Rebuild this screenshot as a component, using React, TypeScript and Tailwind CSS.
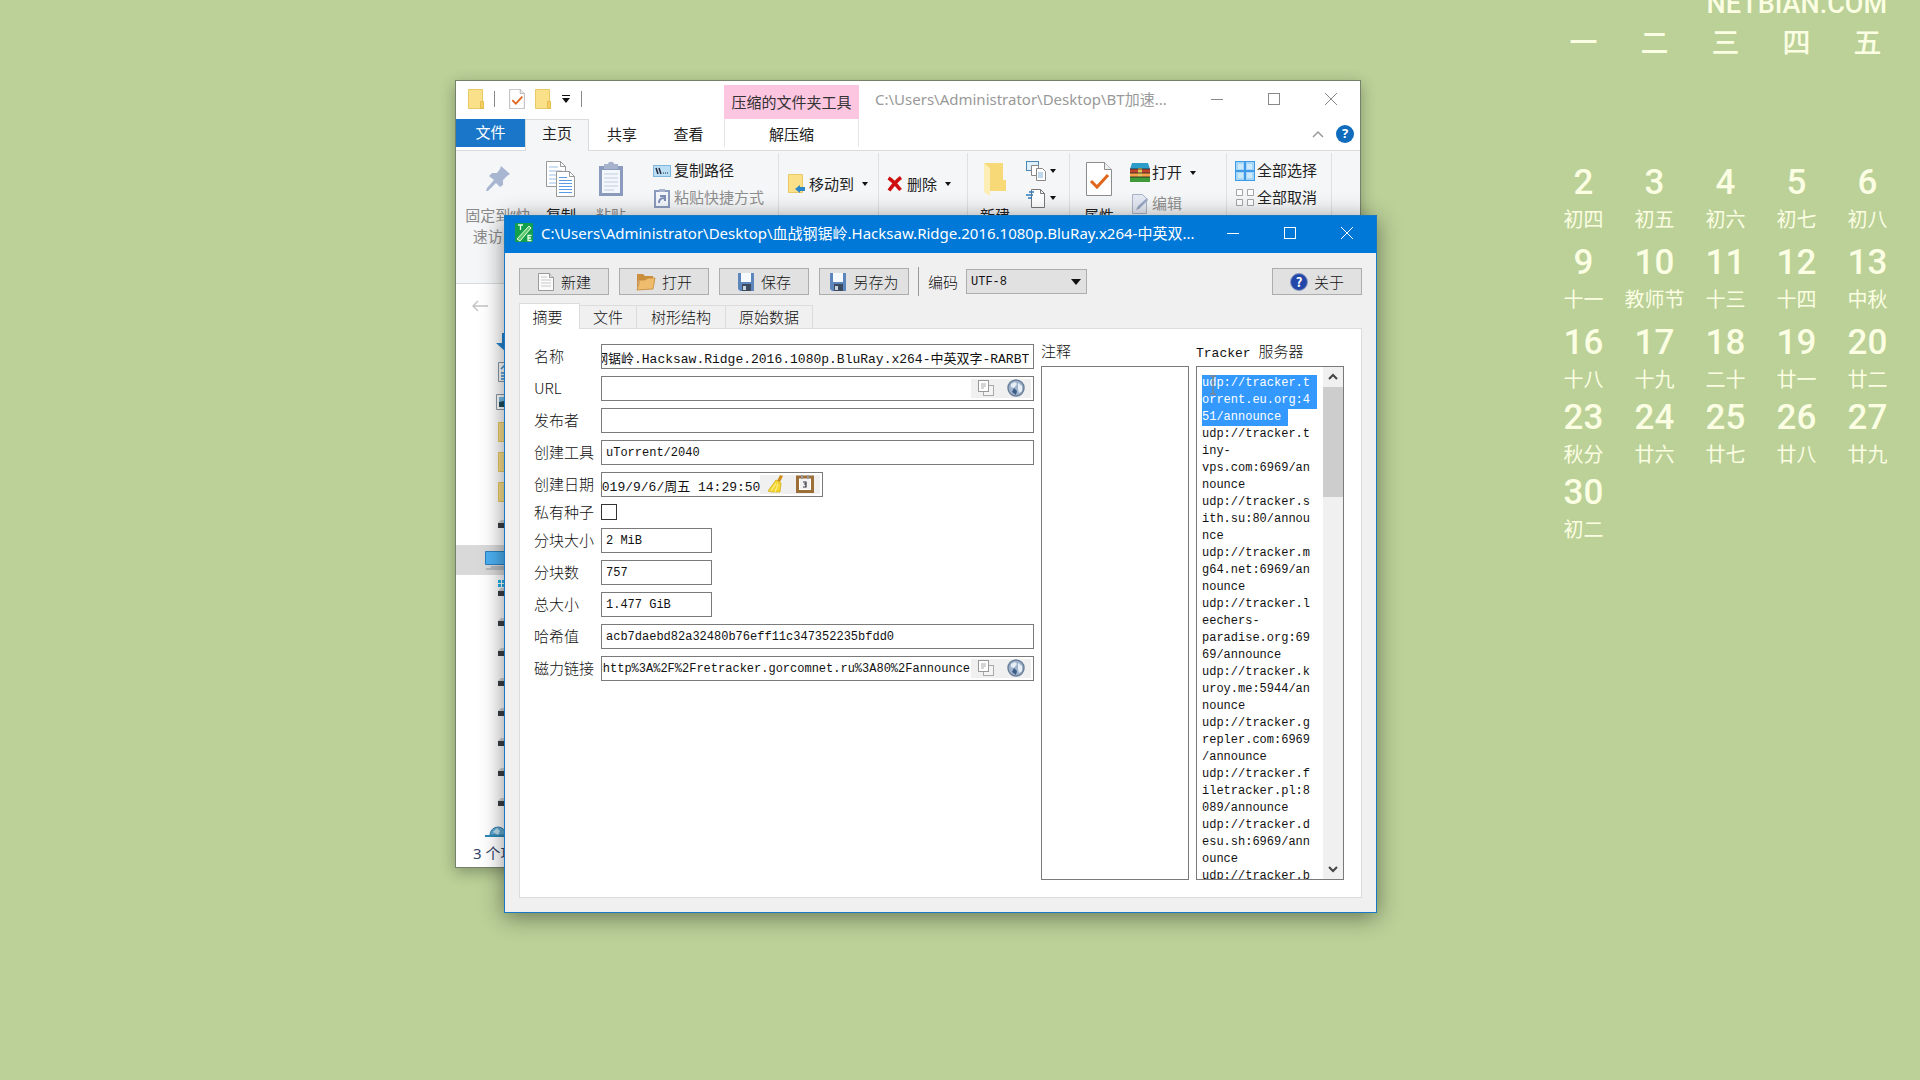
import { useEffect, useRef, type ReactNode } from "react";
import clsx from "clsx";

const weekdays = ["一", "二", "三", "四", "五"];

const weeks = [
  [["2", "初四"], ["3", "初五"], ["4", "初六"], ["5", "初七"], ["6", "初八"]],
  [["9", "十一"], ["10", "教师节"], ["11", "十三"], ["12", "十四"], ["13", "中秋"]],
  [["16", "十八"], ["17", "十九"], ["18", "二十"], ["19", "廿一"], ["20", "廿二"]],
  [["23", "秋分"], ["24", "廿六"], ["25", "廿七"], ["26", "廿八"], ["27", "廿九"]],
  [["30", "初二"]],
];

const trackers = [
  "udp://tracker.t\norrent.eu.org:4\n51/announce",
  "udp://tracker.t\niny-\nvps.com:6969/an\nnounce",
  "udp://tracker.s\nith.su:80/annou\nnce",
  "udp://tracker.m\ng64.net:6969/an\nnounce",
  "udp://tracker.l\neechers-\nparadise.org:69\n69/announce",
  "udp://tracker.k\nuroy.me:5944/an\nnounce",
  "udp://tracker.g\nrepler.com:6969\n/announce",
  "udp://tracker.f\niletracker.pl:8\n089/announce",
  "udp://tracker.d\nesu.sh:6969/ann\nounce",
  "udp://tracker.b",
];

/* ---------- Icons ---------- */

function FolderIcon({ className }: { className?: string }) {
  return (
    <svg viewBox="0 0 16 20" className={className} preserveAspectRatio="none">
      <path d="M.5.5h14v12h1v7H.5z" fill="#fbe08a" stroke="#e9c964" />
      <path d="M12.500 12.500h3v7h-3z" fill="#f3cf62" stroke="#e3bd50" />
    </svg>
  );
}

function Caret() {
  return (
    <svg viewBox="0 0 6 4" className="h-1 w-1.5 shrink-0">
      <path d="M0 0h6L3 4z" fill="#111" />
    </svg>
  );
}

function CheckDocIcon({ className }: { className?: string }) {
  return (
    <svg viewBox="0 0 26 34" className={className}>
      <path d="M.5.5h18l7 7v26H.5z" fill="#fff" stroke="#8d8d8d" />
      <path d="M18.500.5v7h7" fill="#eee" stroke="#8d8d8d" />
      <path d="M5 19l6 6L22 13" fill="none" stroke="#e0661b" strokeWidth="3" />
    </svg>
  );
}

function PinIcon() {
  return (
    <svg viewBox="0 0 26 26" className="h-[26px] w-[26px]">
      <path d="M16 0l9 8-3 2-1 1-3 3v5l-3 2-4-4-8 8-2 0 1-3 7-8-5-4 3-3h5l3-4z" fill="#a9b6d2" />
    </svg>
  );
}

function CopyIcon() {
  return (
    <svg viewBox="0 0 30 36" className="h-9 w-[30px]">
      <path d="M.5.5h14l5 5v20H.5z" fill="#fff" stroke="#999" />
      <path d="M14.500.5v5h5" fill="none" stroke="#999" />
      <path d="M3 6h9M3 10h13M3 14h8M3 18h8M3 22h8" stroke="#9cbfe8" />
      <path d="M10.500 10.500h13l5 5v20h-18z" fill="#fff" stroke="#999" />
      <path d="M23.500 10.500v5h5" fill="none" stroke="#999" />
      <path d="M13 16.500h8M13 19.500h13M13 22.500h13M13 25.500h13M13 28.500h13M13 31.500h13" stroke="#5b9ae4" />
    </svg>
  );
}

function PasteIcon() {
  return (
    <svg viewBox="0 0 26 36" className="h-9 w-[26px]">
      <rect x="1" y="5" width="24" height="30" fill="#8b9bbd" />
      <rect x="4" y="9" width="18" height="23" fill="#f3f6fb" />
      <path d="M6 3h4c0-3 6-3 6 0h4v5H6z" fill="#a7b3cd" />
      <path d="M6 13h14M6 17h14M6 21h14M6 25h14M6 29h10" stroke="#c3cee2" />
    </svg>
  );
}

function PathIcon() {
  return (
    <svg viewBox="0 0 18 12" className="h-3 w-[18px]">
      <rect x=".5" y=".5" width="17" height="11" fill="#b9def5" stroke="#7fb6dc" />
      <path d="M3 3l2 6M6 3l2 6" stroke="#223" strokeWidth="1.400" />
      <path d="M10 8h1M12 8h1M14 8h1" stroke="#223" />
    </svg>
  );
}

function ShortcutIcon() {
  return (
    <svg viewBox="0 0 18 20" className="h-5 w-[18px]">
      <path d="M2 3h14v16H2z" fill="#f3f6fb" stroke="#8b9bbd" strokeWidth="2" />
      <path d="M6 1h6v3H6z" fill="#a7b3cd" />
      <path d="M6 15c0-4 2-5 5-5M7 8h5v5" fill="none" stroke="#7d8fb5" strokeWidth="2" />
    </svg>
  );
}

function MoveToIcon() {
  return (
    <svg viewBox="0 0 18 20" className="h-5 w-[18px]">
      <path d="M.5.5h14v18H.5z" fill="#fbe08a" stroke="#e9c964" />
      <path d="M7 15l5-4v2h5v4h-5v2z" fill="#2a86c8" />
    </svg>
  );
}

function DeleteIcon() {
  return (
    <svg viewBox="0 0 16 16" className="h-4 w-4">
      <path d="M1.500 2c5 3 8 7 12 12M14 1.500C9 5 6 9 2 14.500" fill="none" stroke="#cf1010" strokeWidth="3.600" />
    </svg>
  );
}

function NewFolderIcon() {
  return (
    <svg viewBox="0 0 24 34" className="h-[34px] w-6">
      <path d="M1 1h19v17h3v11H6z" fill="#f8d978" />
      <path d="M1 1l6 5v28l-6-4z" fill="#fdeeb5" />
    </svg>
  );
}

function NewItemIcon() {
  return (
    <svg viewBox="0 0 20 20" className="h-5 w-5">
      <rect x=".5" y=".5" width="12" height="9" fill="#dff0fb" stroke="#4d87b5" />
      <path d="M5.500 4.500h7v10h-7z" fill="#fff" stroke="#888" />
      <path d="M10.500 7.500h6l3 3v9h-9z" fill="#fff" stroke="#888" />
      <path d="M12 12h5M12 14h5M12 16h5" stroke="#7fb0dc" />
    </svg>
  );
}

function EasyAccessIcon() {
  return (
    <svg viewBox="0 0 20 20" className="h-5 w-5">
      <path d="M5.500 1.500h9l4 4v14h-13z" fill="#fff" stroke="#777" />
      <path d="M14.500 1.500v4h4" fill="none" stroke="#777" />
      <path d="M3 4h5M0 7h7M2 10h4" stroke="#2c7cc0" strokeWidth="1.500" />
    </svg>
  );
}

function ArchiveIcon() {
  return (
    <svg viewBox="0 0 20 19" className="h-[19px] w-5">
      <path d="M2 0h16l2 6H0z" fill="#2e9cc9" />
      <rect y="6" width="20" height="4" fill="#c0452f" />
      <rect y="10" width="20" height="4" fill="#f2a24a" />
      <rect y="14" width="20" height="5" fill="#3f9a3a" />
      <rect x="8" y="5" width="4" height="9" fill="#e3c25a" />
      <path d="M0 6h20M0 10h20M0 14h20" stroke="#222" strokeWidth=".8" />
    </svg>
  );
}

function EditIcon() {
  return (
    <svg viewBox="0 0 18 20" className="h-5 w-[18px]">
      <path d="M1.500.5h10l4 4v15h-14z" fill="#e4e9f3" stroke="#aab4c8" />
      <path d="M5 16l2-4 9-8 1 2-9 9z" fill="#9aa8c4" />
    </svg>
  );
}

function GridIcon({ selected }: { selected?: boolean }) {
  return (
    <svg viewBox="0 0 20 20" className="h-5 w-5">
      {selected ? (
        <>
          <rect width="20" height="20" fill="#3f9be6" />
          <path d="M1 1h8v8H1zM11 1h8v8h-8zM1 11h8v8H1zM11 11h8v8h-8z" fill="#a5d5f8" />
          <path d="M3 3h5v5H3zM12 3h5v5h-5zM3 12h5v5H3zM12 12h5v5h-5z" fill="#cdeafd" />
        </>
      ) : (
        <path d="M1.500 1.500h6v6h-6zM12.500 1.500h6v6h-6zM1.500 11.500h6v6h-6zM12.500 11.500h6v6h-6z" fill="#fff" stroke="#a5a5a5" />
      )}
    </svg>
  );
}

function WindowControls({ className }: { className?: string }) {
  return (
    <div className={clsx("flex shrink-0 pr-px", className)}>
      <button aria-label="最小化" className="flex h-9 w-[57px] items-center justify-center">
        <svg viewBox="0 0 14 14" className="h-3.5 w-3.5" fill="none" stroke="currentColor">
          <path d="M1 7.500h12" />
        </svg>
      </button>
      <button aria-label="最大化" className="flex h-9 w-[57px] items-center justify-center">
        <svg viewBox="0 0 14 14" className="h-3.5 w-3.5" fill="none" stroke="currentColor">
          <rect x="1.500" y="1.500" width="11" height="11" />
        </svg>
      </button>
      <button aria-label="关闭" className="flex h-9 w-[57px] items-center justify-center">
        <svg viewBox="0 0 14 14" className="h-3.5 w-3.5" fill="none" stroke="currentColor">
          <path d="M1 1l12 12M13 1L1 13" />
        </svg>
      </button>
    </div>
  );
}

function HelpIcon({ className }: { className?: string }) {
  return (
    <span className={clsx("flex items-center justify-center rounded-full font-bold text-white", className)}>?</span>
  );
}

function PageIcon() {
  return (
    <svg viewBox="0 0 18 20" className="h-5 w-[18px]">
      <path d="M1.500 1.500h11l4 4v13h-15z" fill="#fafafa" stroke="#9a9a9a" />
      <path d="M12.500 1.500v4h4" fill="#ddd" stroke="#9a9a9a" />
      <path d="M4 5h6M4 8h10M4 11h10M4 14h10" stroke="#c9c9c9" />
    </svg>
  );
}

function OpenIcon() {
  return (
    <svg viewBox="0 0 20 20" className="h-5 w-5">
      <path d="M1 2h6l2 2h8v4H3L1 18z" fill="#c98f3d" />
      <path d="M1 18L4 8h5l3-2h7l-2 11z" fill="#eebc6c" stroke="#c48836" strokeWidth=".8" />
    </svg>
  );
}

function SaveIcon() {
  return (
    <svg viewBox="0 0 18 20" className="h-5 w-[18px]">
      <path d="M1 1h16v18H3l-2-2z" fill="#5d86bc" />
      <rect x="4" y="1" width="10" height="9" fill="#f7fafd" />
      <rect x="5" y="12" width="9" height="7" fill="#3b4a5e" />
      <rect x="6" y="14" width="3" height="4" fill="#c8d2de" />
    </svg>
  );
}

function CopySmallIcon() {
  return (
    <svg viewBox="0 0 18 18" className="h-[18px] w-[18px]">
      <rect x="6.500" y="6.500" width="10" height="10" fill="#f4f4f4" stroke="#a9a9a9" />
      <rect x="1.500" y="1.500" width="10" height="11" fill="#fff" stroke="#999" />
      <path d="M4 5h5M4 7h5M4 9h3" stroke="#aaa" />
    </svg>
  );
}

function GlobeIcon() {
  return (
    <svg viewBox="0 0 18 18" className="h-[18px] w-[18px]">
      <circle cx="9" cy="9" r="8" fill="#9fb4cc" stroke="#6b7f9b" strokeWidth="1.500" />
      <path d="M4 5l4-2 2 2-3 4-3-1zM11 4l4 3v5l-3 2-1-4z" fill="#e7eef6" />
      <path d="M7 9l3 3-1 4-4-3z" fill="#3d5c86" />
    </svg>
  );
}

function BroomIcon() {
  return (
    <svg viewBox="0 0 18 18" className="h-[18px] w-[18px]">
      <path d="M14 0l3 1-3 6-3-1z" fill="#cf8f1c" />
      <path d="M10 5l5 3-1 9H6l-4-1z" fill="#f4d733" stroke="#d2ae14" strokeWidth=".8" />
      <path d="M10 8l-5 8M12 9l-3 8" stroke="#fdf3a0" />
    </svg>
  );
}

function CalendarIcon() {
  return (
    <svg viewBox="0 0 18 18" className="h-[18px] w-[18px]">
      <rect x="1.500" y="2" width="15" height="14.500" fill="#fff" stroke="#9c6f38" strokeWidth="3" />
      <rect x="4" y="4" width="10" height="10" fill="#f2f2f2" />
      <path d="M6 0v4M12 0v4" stroke="#999" strokeWidth="2" />
      <path d="M7 7h3v2H8h2v3H7" fill="none" stroke="#334" strokeWidth="1.200" />
    </svg>
  );
}

function AppIcon() {
  return (
    <svg viewBox="0 0 18 19" className="h-[19px] w-[18px]">
      <rect width="18" height="19" rx="1" fill="#12a14a" />
      <path d="M2 16L14 3l2 2L5 18z" fill="#5fca6c" stroke="#eaffea" />
      <path d="M3 2h5M5.500 2v5M16.500 12.500H13v5h3.500M13 15h3" fill="none" stroke="#eaffea" strokeWidth="1.300" />
    </svg>
  );
}

/* ---------- Wallpaper calendar ---------- */

function Wallpaper() {
  return (
    <div className="absolute top-0 right-[17px] w-[355px] overflow-hidden font-['Noto_Sans_CJK_SC',sans-serif] text-[#fbfee3]">
      <p className="-mt-2.5 h-[27px] pr-4 text-right font-[Roboto,sans-serif] text-[27px] leading-7 font-medium">NETBIAN.COM</p>
      <div className="grid h-12 grid-cols-5 items-center text-center text-[28px] leading-none font-medium">
        {weekdays.map((d) => (
          <span key={d}>{d}</span>
        ))}
      </div>
      <div className="pt-[98px]">
        {weeks.map((week, i) => (
          <div key={i} className={clsx("grid grid-cols-5 text-center", i < 2 ? "h-20" : "h-[75px]")}>
            {week.map(([day, lunar]) => (
              <div key={day}>
                <div className="font-[Roboto,sans-serif] text-[35px] leading-10 font-medium">{day}</div>
                <div className="text-xl leading-8">{lunar}</div>
              </div>
            ))}
          </div>
        ))}
      </div>
    </div>
  );
}

/* ---------- Explorer window ---------- */

function Divider() {
  return <div className="h-full w-px shrink-0 bg-[#dfe0e1]" />;
}

function LargeCommand({ icon, label, muted, className }: { icon: ReactNode; label: ReactNode; muted?: boolean; className: string }) {
  return (
    <button className={clsx("flex shrink-0 flex-col items-center whitespace-nowrap", muted ? "text-[#8a8a8a]" : "text-[#222]", className)}>
      <span className="flex h-12 items-center pb-1">{icon}</span>
      <span className="leading-[21px]">{label}</span>
    </button>
  );
}

function SmallCommand({ icon, label, muted, caret }: { icon: ReactNode; label?: string; muted?: boolean; caret?: boolean }) {
  return (
    <button className={clsx("flex h-[27px] items-center gap-0.5 whitespace-nowrap", muted ? "text-[#8f8f8f]" : "text-[#222]")}>
      <span className="flex w-5 justify-center">{icon}</span>
      {label}
      {caret && (
        <span className={label ? "pl-1.5" : "pl-0.5"}>
          <Caret />
        </span>
      )}
    </button>
  );
}

function DriveRow({ system }: { system?: boolean }) {
  return (
    <li className="flex h-[30px] items-center pl-[42px]">
      <svg viewBox="0 0 20 20" className="h-5 w-5">
        {system && <path d="M0 0h3v3H0zM4 0h3v3H4zM0 4h3v3H0zM4 4h3v3H4z" fill="#22b2e6" />}
        <path d="M3 8h14l3 3H0z" fill="#cfd3d6" />
        <rect y="11" width="20" height="5" fill="#3a3f44" />
      </svg>
    </li>
  );
}

function NavTree() {
  return (
    <ul className="flex flex-col">
      <li className="flex h-[30px] items-center pl-10">
        <svg viewBox="0 0 20 20" className="h-5 w-5">
          <path d="M6 1h8v10h6l-10 9L0 11h6z" fill="#2486d0" />
        </svg>
      </li>
      <li className="flex h-[30px] items-center pl-[42px]">
        <svg viewBox="0 0 20 20" className="h-5 w-5">
          <path d="M.5.5h16v19H.5z" fill="#fff" stroke="#8b98a5" />
          <path d="M3 7l3-3 3 3M3 11h11M3 14h11M3 17h11" fill="none" stroke="#3c8fd2" strokeWidth="1.500" />
        </svg>
      </li>
      <li className="flex h-[30px] items-center pl-10">
        <svg viewBox="0 0 20 16" className="h-4 w-5">
          <path d="M.5.5h19v15H.5z" fill="#fff" stroke="#8b98a5" />
          <path d="M3 3h14v10H3z" fill="#79bfe8" />
          <path d="M3 8l5-1 9 3v3H3z" fill="#1d4f5f" />
        </svg>
      </li>
      {[0, 1, 2].map((n) => (
        <li key={n} className="flex h-[30px] items-center pl-[42px]">
          <FolderIcon className="h-5 w-4" />
        </li>
      ))}
      <DriveRow />
      <li className="mt-2 flex h-[30px] items-center bg-[#d9d9d9] pl-[29px]">
        <svg viewBox="0 0 26 20" className="h-5 w-[26px]">
          <path d="M.5 1.500h25v13H.5z" fill="#4cb0f2" stroke="#2b7fbd" />
          <path d="M6 17h14M1 19h24" stroke="#8c9aa6" />
        </svg>
      </li>
      <DriveRow system />
      {[0, 1, 2, 3, 4, 5, 6].map((n) => (
        <DriveRow key={n} />
      ))}
      <li className="flex h-[30px] items-center pl-[29px]">
        <svg viewBox="0 0 26 16" className="h-4 w-[26px]">
          <path d="M5 13a8 8 0 0 1 16 0z" fill="#5fa9cf" stroke="#3b84ad" />
          <path d="M8 10l4-4 3 3-2 4z" fill="#b9dcec" />
          <path d="M0 14h26" stroke="#2b8ab8" strokeWidth="2" />
        </svg>
      </li>
    </ul>
  );
}

function ExplorerWindow() {
  return (
    <section className="absolute top-20 left-[455px] flex h-[788px] w-[906px] flex-col border border-[#75816a] bg-white font-['Noto_Sans','Noto_Sans_CJK_SC',sans-serif] text-[15px] shadow-[0_4px_14px_rgba(0,0,0,0.3)]">
      {/* Title bar */}
      <div className="flex h-[38px] shrink-0 items-start">
        <div className="flex h-9 w-[268px] items-center pl-3">
          <FolderIcon className="h-5 w-4" />
          <div className="mx-2.5 h-4 w-px bg-[#888]" />
          <CheckDocIcon className="ml-1 h-5 w-4" />
          <FolderIcon className="ml-2.5 h-5 w-4" />
          <svg viewBox="0 0 10 8" className="ml-2.5 h-2 w-2.5">
            <path d="M1 .5h8" stroke="#111" />
            <path d="M1 3h8L5 8z" fill="#111" />
          </svg>
          <div className="ml-2.5 h-4 w-px bg-[#888]" />
        </div>
        <div className="mt-1 flex h-[34px] w-[135px] items-center justify-center bg-[#fcc5e0] text-[#333]">
          压缩的文件夹工具
        </div>
        <h2 className="min-w-0 flex-1 truncate pt-1 pl-4 leading-7 text-[#999]">
          C:\Users\Administrator\Desktop\BT加速...
        </h2>
        <WindowControls className="text-[#888]" />
      </div>

      {/* Ribbon tabs */}
      <div className="flex h-8 shrink-0 items-start border-b border-[#dadbdc] text-[#222]">
        <button className="h-7 w-[69px] bg-[#1976c8] pb-0.5 text-white">文件</button>
        <button className="h-8 w-[64px] border-x border-t border-[#dadbdc] bg-[#f5f6f7] pb-1">主页</button>
        <button className="h-8 w-[66px] pb-0.5">共享</button>
        <button className="h-8 w-[67px] pb-0.5">查看</button>
        <button className="ml-0.5 h-7 w-[135px] border-x border-[#e6e6e6] pt-0.5">解压缩</button>
        <div className="flex h-[30px] flex-1 items-center justify-end gap-3 pr-1.5">
          <svg viewBox="0 0 12 8" className="h-2 w-3" fill="none" stroke="#999" strokeWidth="1.500">
            <path d="M1 7l5-5 5 5" />
          </svg>
          <HelpIcon className="h-[18px] w-[18px] bg-[#0f6cbd] text-[13px]" />
        </div>
      </div>

      {/* Ribbon */}
      <div className="flex h-[133px] shrink-0 items-start border-b border-[#dadbdc] bg-[#f5f6f7] pt-0.5">
        <div className="flex h-[120px] items-start pt-1">
          <LargeCommand
            className="ml-1.5 w-[72px]"
            muted
            icon={<PinIcon />}
            label={
              <>
                固定到“快
                <br />
                速访问”
              </>
            }
          />
          <LargeCommand className="ml-1.5 w-[42px]" icon={<CopyIcon />} label="复制" />
          <LargeCommand className="ml-2 w-[42px]" muted icon={<PasteIcon />} label="粘贴" />
          <div className="ml-5 w-[126px]">
            <SmallCommand icon={<PathIcon />} label="复制路径" />
            <SmallCommand icon={<ShortcutIcon />} label="粘贴快捷方式" muted />
          </div>
        </div>
        <Divider />
        <div className="flex h-[62px] w-[99px] items-center pl-2">
          <SmallCommand icon={<MoveToIcon />} label="移动到" caret />
        </div>
        <Divider />
        <div className="flex h-[62px] w-[88px] items-center pl-1.5">
          <SmallCommand icon={<DeleteIcon />} label="删除" caret />
        </div>
        <Divider />
        <div className="flex h-[120px] w-[101px] items-start pt-1">
          <LargeCommand className="ml-1.5 w-[42px]" icon={<NewFolderIcon />} label="新建" />
          <div className="ml-2.5">
            <SmallCommand icon={<NewItemIcon />} caret />
            <SmallCommand icon={<EasyAccessIcon />} caret />
          </div>
        </div>
        <Divider />
        <div className="flex h-[120px] w-[156px] items-start pt-1">
          <LargeCommand className="ml-2 w-[42px]" icon={<CheckDocIcon className="h-[34px] w-[26px]" />} label="属性" />
          <div className="ml-2.5 flex flex-col gap-1 pt-0.5">
            <SmallCommand icon={<ArchiveIcon />} label="打开" caret />
            <SmallCommand icon={<EditIcon />} label="编辑" muted />
          </div>
        </div>
        <Divider />
        <div className="w-[104px] pt-1 pl-2">
          <SmallCommand icon={<GridIcon selected />} label="全部选择" />
          <SmallCommand icon={<GridIcon />} label="全部取消" />
        </div>
        <Divider />
      </div>

      {/* Address row and navigation */}
      <div className="flex h-[43px] shrink-0 items-center pl-4">
        <svg viewBox="0 0 16 12" className="h-3 w-4" fill="none" stroke="#c4c4c4" strokeWidth="1.500">
          <path d="M16 6H1M6 1L1 6l5 5" />
        </svg>
      </div>
      <NavTree />
      <div className="pl-[17px] leading-4 text-[#33456b]">3 个项目</div>
    </section>
  );
}

/* ---------- Torrent editor window ---------- */

const mono = "font-['Liberation_Mono','Noto_Sans_CJK_SC',monospace]";

function ToolButton({ icon, label }: { icon: ReactNode; label: string }) {
  return (
    <button className="flex h-[27px] w-[90px] items-center justify-center gap-1.5 border border-[#adadad] bg-[#e1e1e1]">
      {icon}
      {label}
    </button>
  );
}

type FieldProps = {
  id: string;
  label: string;
  value?: string;
  width?: string;
  padding?: string;
  small?: boolean;
  toEnd?: boolean;
  actions?: ReactNode;
};

function Field({ id, label, value = "", width = "flex-1", padding = "px-1", small, toEnd, actions }: FieldProps) {
  const ref = useRef<HTMLInputElement>(null);

  // long values show their tail, like after typing
  useEffect(() => {
    if (toEnd && ref.current) ref.current.scrollLeft = ref.current.scrollWidth;
  }, [toEnd]);

  return (
    <div className="flex h-6 items-center">
      <label htmlFor={id} className="w-[67px] shrink-0">
        {label}
      </label>
      <div className={clsx("flex h-[25px] min-w-0 items-center border border-[#7a7a7a] bg-white", width)}>
        <input
          id={id}
          ref={ref}
          defaultValue={value}
          className={clsx("h-full min-w-0 flex-1 pt-0.5 font-normal outline-none", mono, small ? "text-xs" : "text-[13px]", padding)}
        />
        {actions && <div className="mr-0.5 flex h-[19px] shrink-0 items-center gap-3 bg-[#f0f0f0] px-1.5">{actions}</div>}
      </div>
    </div>
  );
}

const linkActions = (
  <>
    <button aria-label="复制">
      <CopySmallIcon />
    </button>
    <button aria-label="打开链接">
      <GlobeIcon />
    </button>
  </>
);

function TrackerBox() {
  const ref = useRef<HTMLTextAreaElement>(null);

  useEffect(() => {
    ref.current?.focus({ preventScroll: true });
    ref.current?.setSelectionRange(0, trackers[0].length + 1);
    if (ref.current) ref.current.scrollTop = 0;
  }, []);

  return (
    <div className="relative flex min-h-0 flex-1 border border-[#7a7a7a] bg-white">
      <textarea
        id="trackers"
        ref={ref}
        wrap="off"
        spellCheck={false}
        defaultValue={trackers.join("\n")}
        className={clsx(
          "min-w-0 flex-1 resize-none overflow-hidden pt-2 pl-[5px] text-xs leading-[17px] font-normal outline-none selection:bg-[#3399ff] selection:text-white",
          mono
        )}
      />
      <div className="flex w-5 shrink-0 flex-col items-center bg-[#f0f0f0]">
        <svg viewBox="0 0 20 20" className="h-5 w-5" fill="none" stroke="#444" strokeWidth="2">
          <path d="M6 12l4-4 4 4" />
        </svg>
        <div className="h-[110px] w-full bg-[#cdcdcd]" />
        <svg viewBox="0 0 20 20" className="mt-auto h-5 w-5" fill="none" stroke="#444" strokeWidth="2">
          <path d="M6 8l4 4 4-4" />
        </svg>
      </div>
      {/* Mouse pointer */}
      <svg viewBox="0 0 8 20" className="pointer-events-none absolute top-2 left-3 h-5 w-2" fill="none" stroke="#7d8590" strokeWidth="1.500">
        <path d="M1 1h2l1 1 1-1h2M4 2v16M1 19h2l1-1 1 1h2" />
      </svg>
    </div>
  );
}

function TorrentWindow() {
  return (
    <section className="absolute top-[215px] left-[504px] flex h-[698px] w-[873px] flex-col border border-[#1579c4] bg-[#f0f0f0] font-['Noto_Sans_CJK_SC',sans-serif] text-[15px] leading-5 text-[#111] shadow-[0_4px_22px_rgba(0,0,0,0.45)]">
      <div className="flex h-[37px] shrink-0 items-center bg-[#0078d7] pb-1 pl-2.5 text-white">
        <AppIcon />
        <h1 className="min-w-0 flex-1 pl-2 font-['Noto_Sans','Noto_Sans_CJK_SC',sans-serif] whitespace-nowrap">
          C:\Users\Administrator\Desktop\血战钢锯岭.Hacksaw.Ridge.2016.1080p.BluRay.x264-中英双...
        </h1>
        <WindowControls />
      </div>

      <div className="flex min-h-0 flex-1 flex-col px-3.5 pt-3.5 pb-3.5 font-light">
        {/* Toolbar */}
        <div className="flex items-center">
          <div className="flex gap-2.5">
            <ToolButton icon={<PageIcon />} label="新建" />
            <ToolButton icon={<OpenIcon />} label="打开" />
            <ToolButton icon={<SaveIcon />} label="保存" />
            <ToolButton icon={<SaveIcon />} label="另存为" />
          </div>
          <div className="mx-[9px] h-[29px] w-px bg-[#9a9a9a]" />
          <label htmlFor="encoding">编码</label>
          <div className="relative ml-2">
            <select
              id="encoding"
              className={clsx("h-[25px] w-[121px] appearance-none border border-[#adadad] bg-[#e1e1e1] pl-1 text-xs font-normal outline-none", mono)}
            >
              <option>UTF-8</option>
            </select>
            <svg viewBox="0 0 10 6" className="pointer-events-none absolute top-2.5 right-1.5 h-1.5 w-2.5">
              <path d="M0 0h10L5 6z" fill="#111" />
            </svg>
          </div>
          <div className="ml-auto">
            <ToolButton icon={<HelpIcon className="h-[18px] w-[18px] border border-[#8f9cc4] bg-[#2347a8] text-[13px]" />} label="关于" />
          </div>
        </div>

        {/* Tabs */}
        <div className="mt-[7px] flex items-end" role="tablist">
          <button role="tab" aria-selected="true" className="relative z-10 -mb-px h-[26px] w-[61px] border border-b-0 border-[#dcdcdc] bg-white pr-1">
            摘要
          </button>
          <button role="tab" className="h-[23px] w-[57px] border-t border-r border-[#dcdcdc]">文件</button>
          <button role="tab" className="h-[23px] w-[89px] border-t border-r border-[#dcdcdc]">树形结构</button>
          <button role="tab" className="h-[23px] w-[87px] border-t border-r border-[#dcdcdc]">原始数据</button>
        </div>

        {/* Summary */}
        <div className="grid min-h-0 flex-1 grid-cols-[minmax(0,1fr)_148px_148px] gap-[7px] border border-[#dcdcdc] bg-white pt-3 pr-[17px] pb-[17px] pl-3.5">
          <div className="flex flex-col gap-2 pt-[3px]">
            <Field id="name" label="名称" value="血战钢锯岭.Hacksaw.Ridge.2016.1080p.BluRay.x264-中英双字-RARBT" padding="pr-1" toEnd />
            <Field id="url" label="URL" actions={linkActions} />
            <Field id="publisher" label="发布者" />
            <Field id="tool" label="创建工具" value="uTorrent/2040" small />
            <Field
              id="date"
              label="创建日期"
              value="2019/9/6/周五 14:29:50"
              width="w-[222px]"
              padding="px-0"
              toEnd
              actions={
                <>
                  <button aria-label="清除">
                    <BroomIcon />
                  </button>
                  <button aria-label="选择日期">
                    <CalendarIcon />
                  </button>
                </>
              }
            />
            <div className="flex h-4 items-center">
              <label htmlFor="private" className="w-[67px]">
                私有种子
              </label>
              <input id="private" type="checkbox" className="h-4 w-4 appearance-none border border-[#333] bg-white" />
            </div>
            <Field id="pieceSize" label="分块大小" value="2 MiB" width="w-[111px]" small />
            <Field id="pieces" label="分块数" value="757" width="w-[111px]" small />
            <Field id="total" label="总大小" value="1.477 GiB" width="w-[111px]" small />
            <Field id="hash" label="哈希值" value="acb7daebd82a32480b76eff11c347352235bfdd0" small />
            <Field
              id="magnet"
              label="磁力链接"
              value="&tr=http%3A%2F%2Fretracker.gorcomnet.ru%3A80%2Fannounce"
              padding="pr-px"
              small
              toEnd
              actions={linkActions}
            />
          </div>

          <div className="flex min-h-0 flex-col">
            <label htmlFor="comment" className="h-[25px]">
              注释
            </label>
            <textarea id="comment" className="min-h-0 flex-1 resize-none border border-[#7a7a7a] bg-white outline-none" />
          </div>

          <div className="flex min-h-0 flex-col">
            <label htmlFor="trackers" className="h-[25px] whitespace-nowrap">
              <span className={clsx("text-[13px] font-normal", mono)}>Tracker </span>服务器
            </label>
            <TrackerBox />
          </div>
        </div>
      </div>
    </section>
  );
}

export default function App() {
  return (
    <main className="relative min-h-screen overflow-hidden bg-[#bbd198]">
      <Wallpaper />
      <ExplorerWindow />
      <TorrentWindow />
    </main>
  );
}
